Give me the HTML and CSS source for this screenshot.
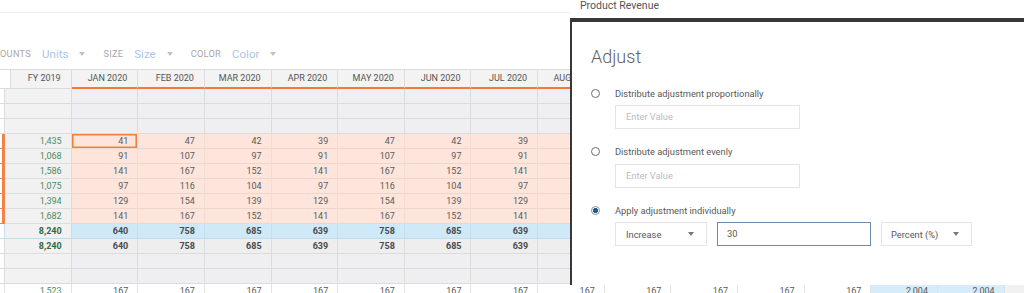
FILE: index.html
```html
<!DOCTYPE html>
<html>
<head>
<meta charset="utf-8">
<link rel="stylesheet" href="styles.css">
</head>
<body>
<div class="page">
  <div class="topbar"></div>
  <div class="toolbar">
    <div class="tb-group"><span class="tb-label">OUNTS</span><span class="tb-value">Units</span><svg class="caret tb-caret" width="6" height="4" viewBox="0 0 6 4"><path d="M0 0h6L3 4z"/></svg></div>
    <div class="tb-group"><span class="tb-label">SIZE</span><span class="tb-value">Size</span><svg class="caret tb-caret" width="6" height="4" viewBox="0 0 6 4"><path d="M0 0h6L3 4z"/></svg></div>
    <div class="tb-group"><span class="tb-label">COLOR</span><span class="tb-value">Color</span><svg class="caret tb-caret" width="6" height="4" viewBox="0 0 6 4"><path d="M0 0h6L3 4z"/></svg></div>
  </div>

  <div class="grid">
    <div class="row head">
      <div class="c lead"></div><div class="c fy">FY 2019</div><div class="c m">JAN 2020</div><div class="c m">FEB 2020</div><div class="c m">MAR 2020</div><div class="c m">APR 2020</div><div class="c m">MAY 2020</div><div class="c m">JUN 2020</div><div class="c m">JUL 2020</div><div class="c m">AUG 2020</div>
    </div>
    <div class="row blank"><div class="c lead"></div><div class="c fy"></div><div class="c"></div><div class="c"></div><div class="c"></div><div class="c"></div><div class="c"></div><div class="c"></div><div class="c"></div><div class="c"></div></div>
    <div class="row blank"><div class="c lead"></div><div class="c fy"></div><div class="c"></div><div class="c"></div><div class="c"></div><div class="c"></div><div class="c"></div><div class="c"></div><div class="c"></div><div class="c"></div></div>
    <div class="row blank"><div class="c lead"></div><div class="c fy"></div><div class="c"></div><div class="c"></div><div class="c"></div><div class="c"></div><div class="c"></div><div class="c"></div><div class="c"></div><div class="c"></div></div>

    <div class="row pink"><div class="c lead"></div><div class="c fy">1,435</div><div class="c sel">41</div><div class="c">47</div><div class="c">42</div><div class="c">39</div><div class="c">47</div><div class="c">42</div><div class="c">39</div><div class="c"></div></div>
    <div class="row pink"><div class="c lead"></div><div class="c fy">1,068</div><div class="c">91</div><div class="c">107</div><div class="c">97</div><div class="c">91</div><div class="c">107</div><div class="c">97</div><div class="c">91</div><div class="c"></div></div>
    <div class="row pink"><div class="c lead"></div><div class="c fy">1,586</div><div class="c">141</div><div class="c">167</div><div class="c">152</div><div class="c">141</div><div class="c">167</div><div class="c">152</div><div class="c">141</div><div class="c"></div></div>
    <div class="row pink"><div class="c lead"></div><div class="c fy">1,075</div><div class="c">97</div><div class="c">116</div><div class="c">104</div><div class="c">97</div><div class="c">116</div><div class="c">104</div><div class="c">97</div><div class="c"></div></div>
    <div class="row pink"><div class="c lead"></div><div class="c fy">1,394</div><div class="c">129</div><div class="c">154</div><div class="c">139</div><div class="c">129</div><div class="c">154</div><div class="c">139</div><div class="c">129</div><div class="c"></div></div>
    <div class="row pink"><div class="c lead"></div><div class="c fy">1,682</div><div class="c">141</div><div class="c">167</div><div class="c">152</div><div class="c">141</div><div class="c">167</div><div class="c">152</div><div class="c">141</div><div class="c"></div></div>

    <div class="row blue tot"><div class="c lead"></div><div class="c fy">8,240</div><div class="c">640</div><div class="c">758</div><div class="c">685</div><div class="c">639</div><div class="c">758</div><div class="c">685</div><div class="c">639</div><div class="c"></div></div>
    <div class="row gray tot"><div class="c lead"></div><div class="c fy">8,240</div><div class="c">640</div><div class="c">758</div><div class="c">685</div><div class="c">639</div><div class="c">758</div><div class="c">685</div><div class="c">639</div><div class="c"></div></div>

    <div class="row blank"><div class="c lead"></div><div class="c fy"></div><div class="c"></div><div class="c"></div><div class="c"></div><div class="c"></div><div class="c"></div><div class="c"></div><div class="c"></div><div class="c"></div></div>
    <div class="row blank"><div class="c lead"></div><div class="c fy"></div><div class="c"></div><div class="c"></div><div class="c"></div><div class="c"></div><div class="c"></div><div class="c"></div><div class="c"></div><div class="c"></div></div>

    <div class="row white"><div class="c lead"></div><div class="c fy">1,523</div><div class="c">167</div><div class="c">167</div><div class="c">167</div><div class="c">167</div><div class="c">167</div><div class="c">167</div><div class="c">167</div><div class="c">167</div><div class="c">167</div><div class="c">167</div><div class="c">167</div><div class="c">167</div><div class="c bl">2,004</div><div class="c bl">2,004</div><div class="c gr"></div></div>
  </div>
</div>

<div class="overlay">
  <div class="ov-title">Product Revenue</div>
  <div class="modal">
    <div class="m-title">Adjust</div>

    <div class="option">
      <div class="opt-row"><span class="radio"></span><span class="opt-label">Distribute adjustment proportionally</span></div>
      <div class="field placeholder">Enter Value</div>
    </div>

    <div class="option">
      <div class="opt-row"><span class="radio"></span><span class="opt-label">Distribute adjustment evenly</span></div>
      <div class="field placeholder">Enter Value</div>
    </div>

    <div class="option">
      <div class="opt-row"><span class="radio on"></span><span class="opt-label">Apply adjustment individually</span></div>
      <div class="controls">
        <div class="select s1"><span>Increase</span><svg class="caret m-caret" width="6" height="4" viewBox="0 0 6 4"><path d="M0 0h6L3 4z"/></svg></div>
        <div class="field value">30</div>
        <div class="select s2"><span>Percent (%)</span><svg class="caret m-caret" width="6" height="4" viewBox="0 0 6 4"><path d="M0 0h6L3 4z"/></svg></div>
      </div>
    </div>
  </div>
</div>
</body>
</html>
```

FILE: styles.css
```css
html, body {
  margin: 0;
  padding: 0;
  overflow: hidden;
  background: #ffffff;
}
body {
  width: 1024px;
  height: 293px;
  position: relative;
  font-family: Roboto, "Noto Sans", "Liberation Sans", sans-serif;
}

.topbar {
  height: 12px;
  border-bottom: 1px solid #efefef;
}

.toolbar {
  height: 56px;
  box-sizing: border-box;
  padding-top: 25px;
  display: flex;
  align-items: center;
}
.tb-group {
  display: flex;
  align-items: center;
  margin-right: 18px;
}
.tb-label {
  font-size: 9.2px;
  color: #a6a6a6;
  letter-spacing: 0.3px;
  margin-right: 11px;
}
.tb-value {
  font-size: 11.5px;
  color: #a8c6e6;
  margin-right: 11px;
}
.caret { display: block; fill: currentColor; }
.tb-caret { color: #c2c2c2; }

/* grid */
.row {
  display: grid;
  grid-template-columns: 5px repeat(16, 66.65px);
  height: 15px;
}
.c {
  box-sizing: border-box;
  border-right: 1px solid #dcdcdc;
  border-bottom: 1px solid #dcdcdc;
  font-size: 9px;
  line-height: 14px;
  text-align: right;
  padding-right: 9px;
  color: #5a5a5a;
  white-space: nowrap;
  overflow: hidden;
}
.lead { padding: 0; background: #ffffff; }

.head {
  height: 20px;
  box-sizing: border-box;
  border-top: 1px solid #dcdcdc;
  background: #f3f3f3;
}
.head .c {
  line-height: 17px;
  padding-right: 10px;
  color: #555;
}
.head .m { border-bottom: 2px solid #f47a3a; }

.blank { background: #efeff1; }
.blank .fy { background: #f2f2f2; }

.pink { background: #fde5dc; }
.pink .c {
  border-bottom-color: #efd6cd;
  border-right-color: #f1ddd6;
}
.pink .lead {
  background: linear-gradient(90deg, #ffffff 2.5px, #f08346 2.5px);
  border-right: none;
  border-bottom-color: #f08346;
}
.pink .fy, .tot .fy {
  background: #f1f1f1;
  border-bottom-color: #dedede;
  border-right-color: #dcdcdc;
}
.fy { color: #4d8a60; }
.sel { box-shadow: inset 0 0 0 1.6px #f0823f; }

.blue { background: #cfe9f9; }
.blue .c { border-bottom-color: #c3dcea; border-right-color: #c6e0ef; }
.gray { background: #eeeeef; }
.tot .c { font-weight: 700; color: #4a4a4a; }
.tot .fy { color: #2f6a46; }
.tot .lead { background: #ffffff; }

.white { background: #ffffff; }
.white .c { border-right-color: #e2e2e2; }
.white .bl { background: #d6ecfa; }
.white .gr { background: #f1f1f1; }

/* overlay panel */
.overlay {
  position: absolute;
  left: 570px;
  top: 0;
  width: 454px;
  height: 285px;
  background: #ffffff;
  display: flex;
  flex-direction: column;
}
.ov-title {
  height: 18px;
  padding-left: 10px;
  font-size: 10.5px;
  line-height: 11px;
  color: #555;
}
.modal {
  flex: 1;
  border-top: 4px solid #383838;
  border-left: 2px solid #383838;
  padding: 24px 0 0 19px;
  background: #ffffff;
}
.m-title {
  font-size: 18px;
  font-weight: 300;
  line-height: 21px;
  color: #5f5f5f;
  margin-bottom: 19px;
}
.option + .option { margin-top: 15.5px; }
.opt-row {
  display: flex;
  align-items: center;
  height: 14px;
}
.radio {
  width: 9px;
  height: 9px;
  box-sizing: border-box;
  border: 1.5px solid #6e6e6e;
  border-radius: 50%;
  margin-right: 15px;
}
.radio.on {
  border-color: #7f93a8;
  background: radial-gradient(circle, #2b5788 0 2.3px, #ffffff 2.8px);
}
.opt-label {
  font-size: 9.3px;
  color: #585858;
}
.field {
  box-sizing: border-box;
  height: 24px;
  border: 1px solid #e4e4e4;
  font-size: 9.3px;
  line-height: 22px;
  padding-left: 10px;
}
.placeholder {
  width: 185px;
  margin: 5px 0 0 24px;
  color: #bcbcbc;
}
.controls {
  display: flex;
  gap: 10px;
  margin: 5px 0 0 24px;
}
.select {
  box-sizing: border-box;
  height: 24px;
  border: 1px solid #e4e4e4;
  display: flex;
  align-items: center;
  justify-content: space-between;
  padding: 0 12px 0 10px;
  font-size: 9.3px;
  color: #585858;
}
.s1 { width: 92px; }
.s2 { width: 91px; padding-left: 9px; }
.m-caret { color: #777; }
.value {
  width: 154px;
  border: 1.5px solid #6d8aa6;
  line-height: 21px;
  padding-left: 9px;
  color: #585858;
}
```
